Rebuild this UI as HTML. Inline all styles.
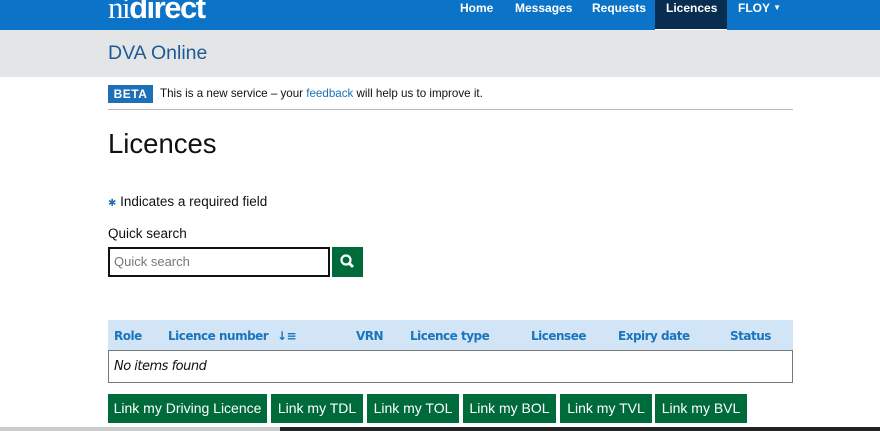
<!DOCTYPE html><html><head><style>
body{margin:0;width:880px;height:431px;overflow:hidden;background:#fff;font-family:"Liberation Sans",sans-serif;position:relative}
.a{position:absolute}
.nav{color:#fff;font-weight:bold;font-size:12px;top:1px}
.btn{position:absolute;top:394px;height:29px;background:#006b3a;color:#fff;font-size:14px;line-height:29px;text-align:center}
.th{position:absolute;top:329px;color:#1b75bc;font-weight:bold;font-size:12px;font-family:"DejaVu Sans",sans-serif;letter-spacing:-0.5px}
</style></head><body>
<div class="a" style="left:0;top:0;width:880px;height:30px;background:#0c74c8"></div>
<div class="a" style="left:108px;top:-10px;color:#fff;font-size:31px;font-family:'Liberation Serif',serif;letter-spacing:-1.5px">ni<b style="font-family:'Liberation Sans';letter-spacing:-1.5px">direct</b></div>
<div class="a" style="left:655px;top:0;width:72px;height:29px;background:#082d50;border-bottom:1px solid #fff"></div>
<div class="a nav" style="left:460px">Home</div>
<div class="a nav" style="left:515px">Messages</div>
<div class="a nav" style="left:592px">Requests</div>
<div class="a nav" style="left:666px">Licences</div>
<div class="a nav" style="left:738px">FLOY <span style="font-size:8px;vertical-align:2px">▼</span></div>
<div class="a" style="left:0;top:30px;width:880px;height:47px;background:#e4e5e7"></div>
<div class="a" style="left:108px;top:42px;color:#1d5a96;font-size:19.5px">DVA Online</div>
<div class="a" style="left:108px;top:85px;width:45px;height:18px;background:#1d70b8;color:#fff;font-weight:bold;font-size:12px;line-height:18px;text-align:center;letter-spacing:0.5px">BETA</div>
<div class="a" style="left:160px;top:87px;font-size:11.6px;color:#111">This is a new service – your <span style="color:#1d70b8">feedback</span> will help us to improve it.</div>
<div class="a" style="left:108px;top:109px;width:685px;height:1px;background:#bbb"></div>
<div class="a" style="left:108px;top:128px;font-size:27.5px;color:#111">Licences</div>
<div class="a" style="left:108px;top:194px;font-size:13.5px;color:#111"><span style="color:#1d70b8;font-size:10px">✱</span> Indicates a required field</div>
<div class="a" style="left:108px;top:226px;font-size:13.5px;color:#111">Quick search</div>
<div class="a" style="left:108px;top:247px;width:218px;height:26px;border:2px solid #111;font-size:13px;color:#777;line-height:26px;text-indent:4px">Quick search</div>
<div class="a" style="left:332px;top:247px;width:31px;height:30px;background:#006b3a"><svg width="31" height="30"><circle cx="14" cy="13" r="4.5" stroke="#fff" stroke-width="2.2" fill="none"/><line x1="17.5" y1="16.5" x2="21" y2="20" stroke="#fff" stroke-width="2.8"/></svg></div>
<div class="a" style="left:108px;top:320px;width:685px;height:30px;background:#d2e5f6"></div>
<div class="th" style="left:114px">Role</div>
<div class="th" style="left:168px">Licence number</div>
<div class="th" style="left:277px">↓≡</div>
<div class="th" style="left:356px">VRN</div>
<div class="th" style="left:410px">Licence type</div>
<div class="th" style="left:531px">Licensee</div>
<div class="th" style="left:618px">Expiry date</div>
<div class="th" style="left:730px">Status</div>
<div class="a" style="left:108px;top:350px;width:683px;height:31px;border:1px solid #777"></div>
<div class="a" style="left:114px;top:359px;font-size:13px;font-style:italic;font-family:'DejaVu Sans',sans-serif;letter-spacing:-0.5px;color:#111">No items found</div>
<div class="btn" style="left:108px;width:159px">Link my Driving Licence</div>
<div class="btn" style="left:271px;width:92px">Link my TDL</div>
<div class="btn" style="left:367px;width:92px">Link my TOL</div>
<div class="btn" style="left:463px;width:93px">Link my BOL</div>
<div class="btn" style="left:560px;width:92px">Link my TVL</div>
<div class="btn" style="left:655px;width:92px">Link my BVL</div>
<div class="a" style="left:0;top:427px;width:280px;height:4px;background:#ccc"></div>
<div class="a" style="left:280px;top:427px;width:600px;height:4px;background:#222"></div>
</body></html>
